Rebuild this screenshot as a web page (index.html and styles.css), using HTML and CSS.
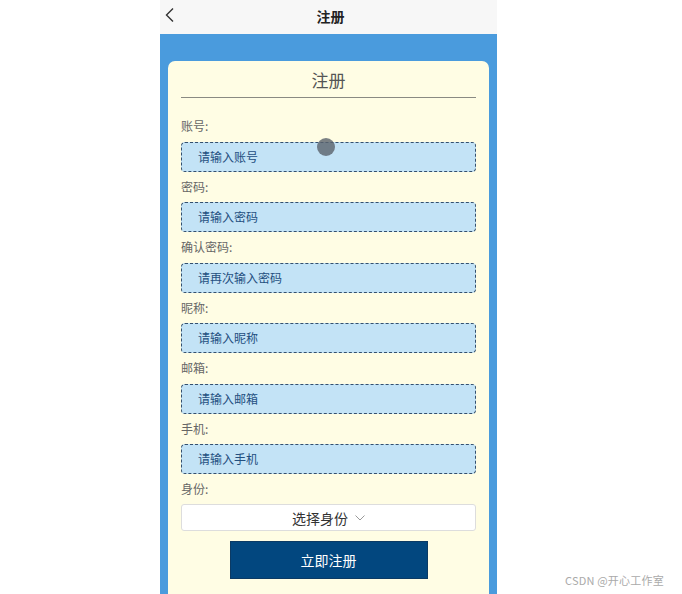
FILE: index.html
```html
<!DOCTYPE html>
<html lang="zh">
<head>
<meta charset="utf-8">
<title>注册</title>
<link rel="stylesheet" href="styles.css">
</head>
<body>
<div class="page">
  <div class="phone">
    <header class="topbar">
      <svg class="back" width="12" height="16" viewBox="0 0 12 16"><path d="M9 1.5 L2.5 8 L9 14.5" fill="none" stroke="#333" stroke-width="1.4"/></svg>
      <span class="topbar-title">注册</span>
    </header>
    <main class="stage">
      <section class="card">
        <h1 class="card-title">注册</h1>
        <div class="rule"></div>
        <div class="fields">
          <div class="field"><label class="label">账号:</label><div class="input">请输入账号</div></div>
          <div class="field"><label class="label">密码:</label><div class="input">请输入密码</div></div>
          <div class="field"><label class="label">确认密码:</label><div class="input">请再次输入密码</div></div>
          <div class="field"><label class="label">昵称:</label><div class="input">请输入昵称</div></div>
          <div class="field"><label class="label">邮箱:</label><div class="input">请输入邮箱</div></div>
          <div class="field"><label class="label">手机:</label><div class="input">请输入手机</div></div>
          <div class="field"><label class="label">身份:</label>
            <div class="select">选择身份<svg class="chev" width="10" height="6" viewBox="0 0 10 6"><path d="M0.5 0.5 L5 5 L9.5 0.5" fill="none" stroke="#999" stroke-width="1"/></svg></div>
          </div>
        </div>
        <div class="actions"><button class="submit">立即注册</button></div>
      </section>
    </main>
    <div class="touch"></div>
  </div>
  <div class="watermark">CSDN @开心工作室</div>
</div>
</body>
</html>
```
FILE: styles.css
```css
* { box-sizing: border-box; }
html, body { margin: 0; padding: 0; background: #fff; }
body { font-family: "Noto Sans CJK SC", "Noto Sans", sans-serif; }
.page { position: relative; width: 682px; height: 594px; overflow: hidden; padding-left: 160px; }
.phone { position: relative; width: 337px; height: 594px; display: flex; flex-direction: column; }
.topbar { height: 34px; background: #f7f7f7; display: flex; align-items: center; justify-content: center; position: relative; }
.back { position: absolute; left: 4px; top: 7px; }
.topbar-title { font-size: 14px; font-weight: 700; color: #222; margin-left: 4px; margin-top: -3px; }
.stage { flex: 1; background: #4a9bdd; padding: 27px 8px 0; overflow: hidden; }
.card { background: #fffde4; border-radius: 7px 7px 0 0; padding: 7px 13px 20px; height: 560px; }
.card-title { margin: 0; font-size: 17px; font-weight: 400; line-height: 24px; color: #555; text-align: center; }
.rule { margin-top: 5px; border-top: 1.5px solid #8a8a82; }
.fields { margin-top: 13px; display: flex; flex-direction: column; }
.field { margin-top: 7px; display: flex; flex-direction: column; gap: 8px; }
.label { font-size: 12px; line-height: 15.5px; color: #666; }
.input { height: 30px; background: #c3e3f6; border: 1px dashed #34506e; border-radius: 4px; padding-left: 16px; font-size: 12px; line-height: 28px; color: #234f7f; }
.select { height: 27px; margin-top: -0.5px; background: #fff; border: 1px solid #ddd; border-radius: 3px; display: flex; align-items: center; justify-content: center; gap: 7px; font-size: 14px; color: #333; }
.chev { margin-top: 1px; }
.actions { display: flex; justify-content: center; margin-top: 10px; }
.submit { width: 198px; height: 38px; background: #02477f; border: 1px solid #0b3a64; color: #fff; font-family: inherit; font-size: 14px; padding: 0; }
.touch { position: absolute; left: 157px; top: 138px; width: 18px; height: 18px; border-radius: 50%; background: rgba(90, 98, 108, 0.8); }
.watermark { position: absolute; left: 565px; top: 572px; font-size: 11px; color: #aaa; letter-spacing: 0.2px; font-family: "Noto Sans CJK SC", "DejaVu Sans", sans-serif; }
```
